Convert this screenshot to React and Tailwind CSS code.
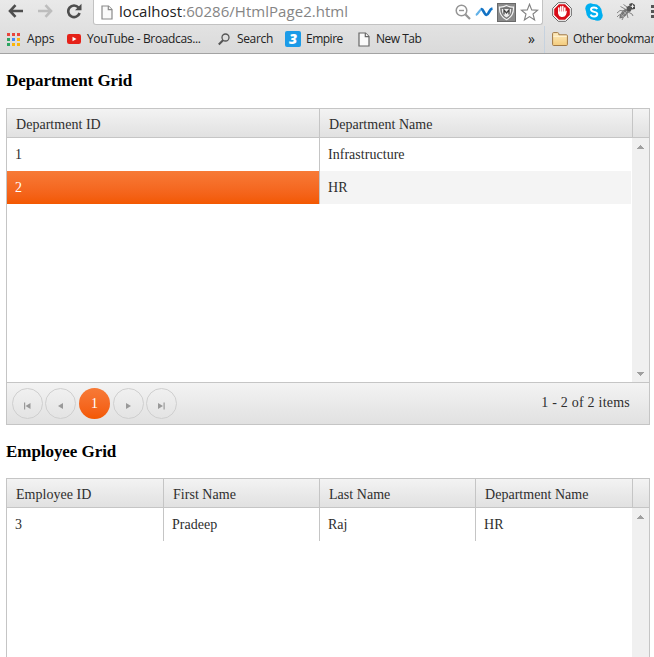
import clsx from 'clsx'

const departments = {
  columns: [
    { title: 'Department ID', width: 'w-[313px]' },
    { title: 'Department Name', width: 'w-[313px]' },
  ],
  rows: [
    ['1', 'Infrastructure'],
    ['2', 'HR'],
  ],
}

const employees = {
  columns: [
    { title: 'Employee ID', width: 'w-[157px]' },
    { title: 'First Name', width: 'w-[156px]' },
    { title: 'Last Name', width: 'w-[156px]' },
    { title: 'Department Name', width: 'w-[157px]' },
  ],
  rows: [['3', 'Pradeep', 'Raj', 'HR']],
}

const appColors = [
  '#e8453c', '#e8453c', '#e8453c',
  '#2da562', '#4286f5', '#fbb50b',
  '#2da562', '#fbb50b', '#fbb50b',
]

function BackIcon({ className }) {
  return (
    <svg className={className} width="16" height="14" viewBox="0 0 16 14" fill="none" stroke="currentColor" strokeWidth="2.6">
      <path d="M7.500 1.200 2 7l5.500 5.800M2 7h13" />
    </svg>
  )
}

function ReloadIcon() {
  return (
    <svg width="16" height="16" viewBox="0 0 16 16">
      <path d="M12.500 4.500A5.800 5.800 0 1 0 13.600 10" fill="none" stroke="#4d4d4d" strokeWidth="2.600" />
      <path d="M15.500 0.800V7.200H9z" fill="#4d4d4d" />
    </svg>
  )
}

function PageIcon({ stroke, className }) {
  return (
    <svg className={className} width="12" height="15" viewBox="0 0 12 15" fill="#fafafa" stroke={stroke} strokeWidth="1.200">
      <path d="M1 1h6.500L11 4.500V14H1z" />
      <path d="M7.300 1v3.700H11" />
    </svg>
  )
}

function ZoomOutIcon() {
  return (
    <svg width="16" height="16" viewBox="0 0 16 16" fill="none" stroke="#959595">
      <circle cx="6.500" cy="6.500" r="5.300" strokeWidth="1.500" />
      <path d="M4 6.500h5" strokeWidth="1.400" />
      <path d="m10.500 10.500 4.500 4.500" strokeWidth="2.200" />
    </svg>
  )
}

function WaveIcon() {
  return (
    <svg width="18" height="10" viewBox="0 0 18 10" fill="none">
      <path d="M.8 8C3.500 7.500 4.500 2 7.200 2" stroke="#63b2e8" strokeWidth="2.200" />
      <path d="M6 2.200C8.500 1.500 9 7.800 11.500 7.800c2.600 0 2.400-5.600 6-6.300" stroke="#1272c4" strokeWidth="2.700" />
    </svg>
  )
}

function ShieldIcon() {
  return (
    <svg width="19" height="19" viewBox="0 0 19 19">
      <rect x="0.500" y="0.500" width="18" height="18" fill="#8b8b8b" stroke="#6a6a6a" />
      <path d="M2.500 4c3 .2 5-.3 7-1.500 2 1.200 4 1.700 7 1.500 .3 6.500-1.500 10-7 12.700C4 14 2.200 10.500 2.500 4z" fill="#777" stroke="#f2f2f2" strokeWidth="1.200" />
      <path d="M4.800 6h9.400c0 3.500-1 6.500-4.700 8.500C5.800 12.500 4.800 9.500 4.800 6z" fill="#eee" />
      <path d="M7 11.500V7l2.500 3L12 7v4.500" fill="none" stroke="#444" strokeWidth="1.300" />
    </svg>
  )
}

function StarIcon() {
  return (
    <svg width="19" height="19" viewBox="0 0 19 19">
      <path d="m9.500 1.200 2.200 5.700 6 .3-4.700 3.800 1.600 6-5.100-3.400-5.100 3.400 1.600-6L1.300 7.200l6-.3z" fill="#fff" stroke="#828282" strokeWidth="1.100" />
    </svg>
  )
}

function AdblockIcon() {
  return (
    <svg width="20" height="20" viewBox="0 0 20 20">
      <path d="M6.300.7h7.400l5.600 5.600v7.400l-5.600 5.600H6.300L.7 13.700V6.300z" fill="#fff" stroke="#555" strokeWidth="0.900" />
      <path d="M6.900 2.200h6.200l4.700 4.700v6.200l-4.700 4.700H6.900l-4.700-4.700V6.900z" fill="#d80d18" />
      <path d="M6.800 6v5M8.800 4.700V10M10.800 4.500V10M12.800 6v5" stroke="#fff" strokeWidth="1.500" strokeLinecap="round" />
      <path d="M6 9.500h7.400l1.400-1c0 3-1 6.500-4.400 6.500C7.300 15 6 12.800 6 9.500z" fill="#fff" />
    </svg>
  )
}

function SkypeIcon() {
  return (
    <svg width="18" height="18" viewBox="0 0 18 18">
      <circle cx="5.500" cy="5.500" r="5.200" fill="#00aff0" />
      <circle cx="12.500" cy="12.500" r="5.200" fill="#00aff0" />
      <circle cx="9" cy="9" r="7.900" fill="#00aff0" />
      <path d="M12.200 6.200C11.700 4.900 10.500 4.500 9 4.500c-1.700 0-3 .7-3 2.100 0 3.200 6.300 1.400 6.300 4.500 0 1.600-1.400 2.400-3.200 2.400-1.700 0-3-.7-3.400-2.100" fill="none" stroke="#fff" strokeWidth="1.900" />
    </svg>
  )
}

function BugIcon() {
  return (
    <svg width="20" height="20" viewBox="0 0 20 20">
      <path d="M9 7 4.500 4.500M9 9 4 8.500 1 11M7 12l-4 1-2 2M8 14l-2 4M11 12l1 4M12 10l4 2 1 2M11 5 7.500 2.500" fill="none" stroke="#858585" />
      <path d="M3.500 16.500C3 13 6 8.500 10 6.500l3 3c-2 4-6 7-9.500 7z" fill="#777" />
      <path d="M5.500 15 11 9M5 12.500l3 2.500M7.500 9.500l3 3" stroke="#b5b5b5" strokeWidth="0.800" />
      <path d="M10.500 5 14 3.200l2.500 3L14 10l-3-1.500z" fill="#555" />
      <path d="m13 2 3-1 3 2v4l-3 .5z" fill="#4a4a4a" />
      <path d="M16.500 2.500v3.600M14.700 4.300h3.600" stroke="#eee" />
    </svg>
  )
}

function SearchIcon() {
  return (
    <svg className="shrink-0" width="12" height="13" viewBox="0 0 12 13" fill="none" stroke="#555">
      <circle cx="7.500" cy="4.500" r="3.500" strokeWidth="1.300" />
      <path d="M5 7.200.800 11.500" strokeWidth="2" />
    </svg>
  )
}

function FolderIcon() {
  return (
    <svg className="shrink-0" width="16" height="14" viewBox="0 0 16 14">
      <defs>
        <linearGradient id="folder" x1="0" y1="0" x2="0" y2="1">
          <stop offset="0" stopColor="#ffedc0" />
          <stop offset="1" stopColor="#f3cb7c" />
        </linearGradient>
      </defs>
      <path d="M.600 12.500V1.600q0-1 1-1h3.900q1 0 1.200 1l.2 1.200h7.500q1 0 1 1v8.700q0 1-1 1H1.600q-1 0-1-1z" fill="url(#folder)" stroke="#a07845" />
      <path d="M1.300 4.300h13.400" stroke="#fff6da" />
    </svg>
  )
}

function Bookmark({ icon, label, className, text }) {
  return (
    <div className={clsx('flex shrink-0 items-center whitespace-nowrap', className)}>
      {icon}
      <span className={text}>{label}</span>
    </div>
  )
}

function Browser() {
  return (
    <header className="flex h-[54px] flex-col overflow-hidden border-b border-[#a3a3a3] bg-linear-to-b from-[#e9e9e9] to-[#dadada] font-['Open_Sans','Noto_Sans',sans-serif]">
      <div className="flex h-[25px] shrink-0">
        <div className="flex w-[93px] shrink-0 items-center pb-[3px] pl-[8px]">
          <BackIcon className="text-[#4d4d4d]" />
          <BackIcon className="ml-[13px] -scale-x-100 text-[#bdbdbd]" />
          <div className="ml-[13px]"><ReloadIcon /></div>
        </div>
        <div className="flex w-[450px] shrink-0 items-center rounded-b-[3px] border border-t-0 border-[#c2c2c2] bg-white pl-[7px]">
          <PageIcon stroke="#8a8a8a" className="shrink-0" />
          <span className="ml-[6px] w-[336px] shrink-0 pb-[2px] text-[15px] leading-5 tracking-[0.04px] text-[#858585]">
            <span className="text-[#222]">localhost</span>:60286/HtmlPage2.html
          </span>
          <div className="flex items-center gap-[4px]">
            <ZoomOutIcon />
            <WaveIcon />
            <ShieldIcon />
            <StarIcon />
          </div>
        </div>
        <div className="flex items-center pb-[2px] pl-[9px]">
          <AdblockIcon />
          <div className="ml-[13px]"><SkypeIcon /></div>
          <div className="ml-[13px]"><BugIcon /></div>
          <div className="ml-[15px] flex flex-col gap-[2px]">
            <i className="size-[3px] bg-[#555]" />
            <i className="size-[3px] bg-[#555]" />
            <i className="size-[3px] bg-[#555]" />
          </div>
        </div>
      </div>
      <div className="flex h-[28px] shrink-0 items-center pl-[7px] text-[12px] leading-4 text-[#222]">
        <Bookmark
          className="w-[60px]"
          label="Apps"
          text="ml-[7px] tracking-[-0.2px]"
          icon={
            <div className="grid grid-cols-3 gap-[2px]">
              {appColors.map((color, i) => (
                <i key={i} className="size-[3px]" style={{ backgroundColor: color }} />
              ))}
            </div>
          }
        />
        <Bookmark
          className="w-[151px]"
          label="YouTube - Broadcas..."
          text="ml-[6px] tracking-[-0.35px]"
          icon={
            <svg className="shrink-0" width="14" height="10" viewBox="0 0 14 10">
              <rect width="14" height="10" rx="2.200" fill="#e52118" />
              <path d="m5.500 2.800 4 2.200-4 2.200z" fill="#fff" />
            </svg>
          }
        />
        <Bookmark className="w-[67px]" label="Search" text="ml-[7px] tracking-[-0.35px]" icon={<SearchIcon />} />
        <Bookmark
          className="w-[73px]"
          label="Empire"
          text="ml-[5px] tracking-[-0.5px]"
          icon={
            <span className="flex size-4 items-center justify-center rounded-[2px] bg-[#1b9be8] text-[14px] font-extrabold italic text-white">3</span>
          }
        />
        <Bookmark className="w-[170px]" label="New Tab" text="ml-[6px] tracking-[-0.5px]" icon={<PageIcon stroke="#666" className="shrink-0" />} />
        <span className="w-[16px] shrink-0 text-[14px]">»</span>
        <div className="mr-[7px] h-[27px] w-px shrink-0 bg-[#c6d2df]" />
        <Bookmark label="Other bookmar" text="ml-[5px] tracking-[-0.35px]" icon={<FolderIcon />} />
      </div>
    </header>
  )
}

function Arrow({ down }) {
  return (
    <svg className={clsx(down && 'rotate-180')} width="7" height="4" viewBox="0 0 7 4" shapeRendering="crispEdges">
      <path d="M3 0h1v1h1v1h1v1h1v1H0V3h1V2h1V1h1z" fill="#a0a0a0" />
    </svg>
  )
}

function Grid({ columns, rows, selected, height, children }) {
  return (
    <div className="w-[644px] border border-[#c5c5c5] text-[14px] leading-5 tracking-[0.03px] text-[#2e2e2e]">
      <div className="flex h-[29px] border-b border-[#c5c5c5] bg-linear-to-b from-[#f3f3f3] to-[#e1e1e1]">
        {columns.map((col) => (
          <div key={col.title} className={clsx('shrink-0 border-r border-[#c5c5c5] pt-[6px] pl-[9px]', col.width)}>
            {col.title}
          </div>
        ))}
      </div>
      <div className={clsx('flex', height)}>
        <div className="w-[624px]">
          {rows.map((row, i) => (
            <div key={row[0]} className={clsx('flex h-[33px] overflow-hidden', i % 2 === 1 && 'bg-[#f4f4f4]')}>
              {row.map((cell, j) => (
                <div
                  key={j}
                  className={clsx(
                    'shrink-0 pt-[7px] pl-[8px]',
                    columns[j].width,
                    j < row.length - 1 && 'border-r border-[#c5c5c5]',
                    selected === row[0] && j === 0 && 'bg-linear-to-b from-[#f77a36] to-[#f35800] text-white',
                  )}
                >
                  {cell}
                </div>
              ))}
            </div>
          ))}
        </div>
        <div className="ml-auto flex w-[17px] flex-col items-center justify-between bg-[#f0f0f0] pt-[7px] pb-[6px]">
          <Arrow />
          <Arrow down />
        </div>
      </div>
      {children}
    </div>
  )
}

function PagerButton({ path }) {
  return (
    <button className="flex size-[31px] items-center justify-center rounded-full border border-[#cfcfcf] pt-[4px]">
      <svg width="9" height="8" viewBox="0 0 9 8">
        <path d={path} fill="#999" />
      </svg>
    </button>
  )
}

function Pager() {
  return (
    <div className="flex h-[42px] items-center border-t border-[#c5c5c5] bg-linear-to-b from-[#f3f3f3] to-[#e1e1e1] pr-[19px] pl-[5px]">
      <div className="flex gap-[2px]">
        <PagerButton path="M1 .5h1.200v7H1zM7.500 1v6L2.500 4z" />
        <PagerButton path="M7 1v6L2 4z" />
        <span className="mr-px ml-px flex size-[31px] items-center justify-center rounded-full bg-linear-to-b from-[#f77a36] to-[#f35800] text-white">1</span>
        <PagerButton path="M2 1v6l5-3z" />
        <PagerButton path="M6.500 .5h1.200v7H6.500zM1 1v6l5-3z" />
      </div>
      <span className="ml-auto pb-[2px] tracking-[0.22px]">1 - 2 of 2 items</span>
    </div>
  )
}

export default function App() {
  return (
    <div className="h-[657px] w-[654px] overflow-hidden bg-white font-['Liberation_Serif',serif]">
      <Browser />
      <main className="px-[6px]">
        <h3 className="h-[54px] pt-[17px] text-[17px] leading-5 font-bold tracking-[-0.06px] text-black">Department Grid</h3>
        <Grid {...departments} selected="2" height="h-[244px]">
          <Pager />
        </Grid>
        <h3 className="h-[53px] pt-[17px] text-[17px] leading-5 font-bold tracking-[-0.06px] text-black">Employee Grid</h3>
        <Grid {...employees} height="h-[244px]" />
      </main>
    </div>
  )
}
